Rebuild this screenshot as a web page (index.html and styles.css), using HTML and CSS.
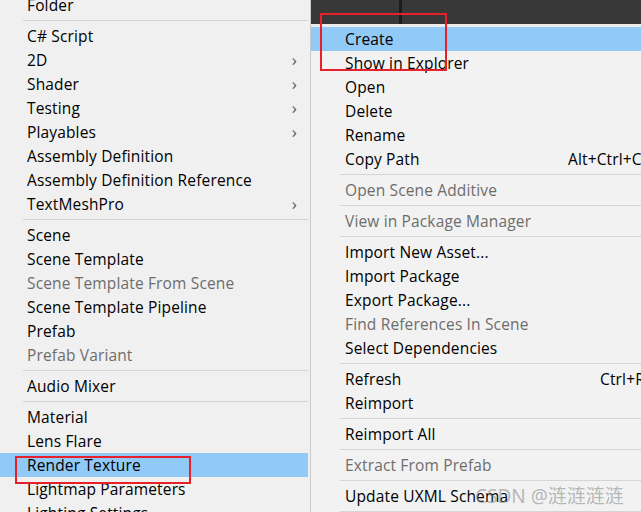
FILE: index.html
```html
<!DOCTYPE html>
<html>
<head>
<meta charset="utf-8">
<link rel="stylesheet" href="styles.css">
</head>
<body>
<div class="screen">
  <div class="menu menu-left">
    <div class="list list-left">
      <div class="item">Folder</div>
      <div class="sep"></div>
      <div class="item">C# Script</div>
      <div class="item sub">2D<span class="chev">›</span></div>
      <div class="item sub">Shader<span class="chev">›</span></div>
      <div class="item sub">Testing<span class="chev">›</span></div>
      <div class="item sub">Playables<span class="chev">›</span></div>
      <div class="item">Assembly Definition</div>
      <div class="item">Assembly Definition Reference</div>
      <div class="item sub">TextMeshPro<span class="chev">›</span></div>
      <div class="sep"></div>
      <div class="item">Scene</div>
      <div class="item">Scene Template</div>
      <div class="item disabled">Scene Template From Scene</div>
      <div class="item">Scene Template Pipeline</div>
      <div class="item">Prefab</div>
      <div class="item disabled">Prefab Variant</div>
      <div class="sep"></div>
      <div class="item">Audio Mixer</div>
      <div class="sep"></div>
      <div class="item">Material</div>
      <div class="item">Lens Flare</div>
      <div class="item active">Render Texture</div>
      <div class="item">Lightmap Parameters</div>
      <div class="item">Lighting Settings</div>
    </div>
  </div>
  <div class="menu menu-right">
    <div class="topbar"><div class="topbar-divider"></div></div>
    <div class="strip"></div>
    <div class="list list-right">
      <div class="item active">Create</div>
      <div class="item">Show in Explorer</div>
      <div class="item">Open</div>
      <div class="item">Delete</div>
      <div class="item">Rename</div>
      <div class="item">Copy Path<span class="key">Alt+Ctrl+C</span></div>
      <div class="sep"></div>
      <div class="item disabled">Open Scene Additive</div>
      <div class="sep"></div>
      <div class="item disabled">View in Package Manager</div>
      <div class="sep"></div>
      <div class="item">Import New Asset...</div>
      <div class="item">Import Package</div>
      <div class="item">Export Package...</div>
      <div class="item disabled">Find References In Scene</div>
      <div class="item">Select Dependencies</div>
      <div class="sep"></div>
      <div class="item">Refresh<span class="key key-r">Ctrl+R</span></div>
      <div class="item">Reimport</div>
      <div class="sep"></div>
      <div class="item">Reimport All</div>
      <div class="sep"></div>
      <div class="item disabled">Extract From Prefab</div>
      <div class="sep"></div>
      <div class="item">Update UXML Schema</div>
      <div class="sep"></div>
    </div>
  </div>
  <div class="mark mark-create"></div>
  <div class="mark mark-render"></div>
  <div class="watermark">CSDN @涟涟涟涟</div>
</div>
</body>
</html>
```

FILE: styles.css
```css
html, body {
  margin: 0;
  padding: 0;
  background: #f0f0f0;
}
.screen {
  position: relative;
  width: 641px;
  height: 512px;
  overflow: hidden;
  display: flex;
  font-family: "Open Sans", "Noto Sans", "Noto Sans CJK SC", sans-serif;
  font-size: 15.5px;
  letter-spacing: 0.15px;
  color: #000;
}
.menu {
  display: flex;
  flex-direction: column;
}
.menu-left {
  width: 308px;
  background: #f0f0f0;
  padding-right: 2px;
  border-right: 1px solid #c9c9c9;
}
.menu-right {
  flex: 1;
  background: #f2f2f2;
  min-width: 0;
}
.list-left {
  margin-top: -7px;
}
.item {
  height: 24px;
  line-height: 24px;
  padding-left: 27px;
  white-space: nowrap;
  position: relative;
  display: flex;
  align-items: center;
}
.list-right .item {
  padding-left: 34px;
}
.item.disabled {
  color: #6d6d6d;
}
.item.active {
  background: #91c9f7;
}
.sep {
  height: 7px;
  display: flex;
  align-items: center;
  padding-left: 23px;
}
.sep::before {
  content: "";
  flex: 1;
  height: 1px;
  background: #d5d5d5;
}
.list-right .sep {
  padding-left: 29px;
}
.chev {
  margin-left: auto;
  margin-right: 11px;
  color: #555;
  font-size: 17px;
  line-height: 24px;
}
.key {
  position: absolute;
  left: 257px;
}
.key-r {
  left: 289px;
}
.topbar {
  height: 24px;
  background: #383838;
  position: relative;
  flex: none;
}
.topbar-divider {
  position: absolute;
  left: 88px;
  top: 0;
  width: 3px;
  height: 24px;
  background: #1c1c1c;
}
.strip {
  height: 3px;
  background: #ececec;
  flex: none;
}
.mark {
  position: absolute;
  border: 2px solid #e62129;
  box-sizing: border-box;
}
.mark-create {
  left: 320px;
  top: 13px;
  width: 127px;
  height: 58px;
}
.mark-render {
  left: 15px;
  top: 456px;
  width: 176px;
  height: 28px;
}
.watermark {
  position: absolute;
  left: 475px;
  top: 481px;
  font-size: 19px;
  letter-spacing: 0;
  color: rgba(130, 130, 130, 0.55);
  font-family: "Noto Sans", "Noto Sans CJK SC", sans-serif;
  white-space: nowrap;
}
```
